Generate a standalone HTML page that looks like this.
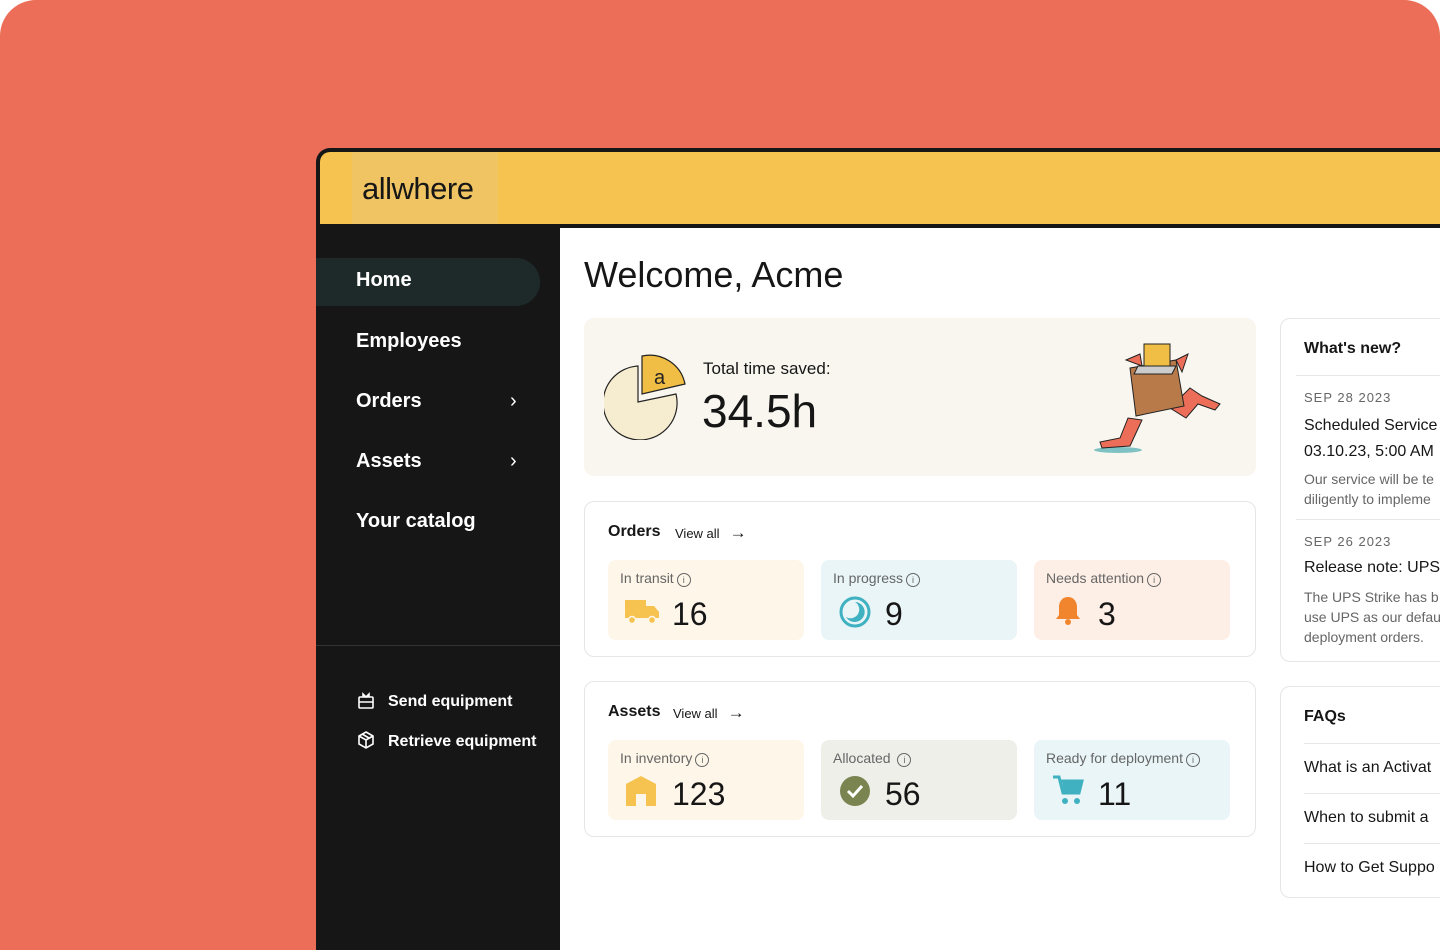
<!DOCTYPE html>
<html><head><meta charset="utf-8"><style>
*{margin:0;padding:0;box-sizing:border-box}
html,body{width:1440px;height:950px;overflow:hidden}
body{background:#fff;font-family:"Liberation Sans",sans-serif;position:relative}
.bg{left:0;top:0;width:1440px;height:950px;background:#ec6e58;border-radius:36px 36px 0 0}
.abs{position:absolute}
.frame{left:316px;top:148px;width:1124px;height:802px;background:#161616;border-radius:14px 0 0 0}
.head{left:320px;top:152px;width:1120px;height:72px;background:#f6c350;border-radius:10px 0 0 0}
.logo{left:352px;top:152px;width:146px;height:72px;background:#f1c463}
.logo span{position:absolute;left:10px;top:19px;font-size:31px;color:#161616;letter-spacing:-0.5px}
.main{left:560px;top:228px;width:880px;height:722px;background:#fff}
.nav{color:#fff;font-weight:bold;font-size:20px;left:356px}
.chev{left:510px;color:#fff;font-size:20px}
.card{border:1px solid #e6e6e6;border-radius:10px;background:#fff}
.stat{border-radius:8px;width:196px;height:80px}
.stat .l{position:absolute;left:12px;top:10px;font-size:14px;color:#666}
.stat .n{position:absolute;left:64px;top:36px;font-size:32px;color:#161616}
.info{display:inline-block;width:14px;height:14px;border:1.3px solid #666;border-radius:50%;font-size:9px;text-align:center;line-height:12px;vertical-align:0px;margin-left:3px;color:#666}
.rt{font-size:16px;color:#161616;left:1304px}
.gray{color:#666;font-size:14px;left:1304px;line-height:20px}
.hr{height:1px;background:#e6e6e6;left:1296px;width:150px}
.arr{font-size:17px;margin-left:10px}
</style></head><body>
<div class="abs bg"></div>
<div class="abs frame"></div>
<div class="abs head"></div>
<div class="abs logo"><span>allwhere</span></div>
<div class="abs main"></div>
<div class="abs" style="left:316px;top:258px;width:224px;height:48px;background:#1e2a2a;border-radius:0 24px 24px 0"></div>
<div class="abs nav" style="top:269px">Home</div>
<div class="abs nav" style="top:330px">Employees</div>
<div class="abs nav" style="top:390px">Orders</div><div class="abs chev" style="top:390px">›</div>
<div class="abs nav" style="top:450px">Assets</div><div class="abs chev" style="top:450px">›</div>
<div class="abs nav" style="top:510px">Your catalog</div>
<div class="abs" style="left:316px;top:645px;width:244px;height:1px;background:#333"></div>
<svg class="abs" style="left:357px;top:692px" width="18" height="18" viewBox="0 0 18 18" fill="none" stroke="#fff" stroke-width="1.6"><rect x="2" y="5" width="14" height="11" rx="1"/><path d="M2 10h14M6 5V2l3 3 3-3v3"/></svg>
<div class="abs" style="left:388px;top:693px;color:#fff;font-weight:bold;font-size:16px">Send equipment</div>
<svg class="abs" style="left:357px;top:731px" width="18" height="18" viewBox="0 0 18 18" fill="none" stroke="#fff" stroke-width="1.6"><path d="M9 1l7 4v8l-7 4-7-4V5zM2 5l7 4 7-4M9 9v8M5 3l7 4"/></svg>
<div class="abs" style="left:388px;top:733px;color:#fff;font-weight:bold;font-size:16px">Retrieve equipment</div>

<div class="abs" style="left:584px;top:254px;font-size:36px;color:#161616">Welcome, Acme</div>

<div class="abs" style="left:584px;top:318px;width:672px;height:158px;background:#f9f6ef;border-radius:10px"></div>
<svg class="abs" style="left:604px;top:354px" width="84" height="86" viewBox="0 0 84 86"><path d="M34 12A37 37 0 1 0 72 40L34 48Z" fill="#f6ecd0" stroke="#222" stroke-width="1.2"/><path d="M38 2A36 36 0 0 1 81 30L38 40Z" fill="#f0bd45" stroke="#222" stroke-width="1.2"/><text x="50" y="30" font-size="20" font-family="Liberation Sans" fill="#222">a</text></svg>
<div class="abs" style="left:703px;top:359px;font-size:17px;color:#161616">Total time saved:</div>
<div class="abs" style="left:702px;top:384px;font-size:46px;color:#161616">34.5h</div>
<svg class="abs" style="left:1090px;top:338px" width="140" height="118" viewBox="0 0 140 118"><ellipse cx="28" cy="112" rx="24" ry="3" fill="#7fc2c4"/><path d="M38 80 L30 100 L10 104 L12 110 L40 108 L52 82Z" fill="#ec6e58" stroke="#222"/><path d="M80 70 L100 50 L112 58 L130 66 L125 72 L108 66 L96 80Z" fill="#ec6e58" stroke="#222"/><path d="M40 30 L86 22 L94 68 L46 78Z" fill="#b87a48" stroke="#222"/><path d="M54 6h26v22H54z" fill="#f0bd45" stroke="#222"/><path d="M48 28h38l-4 8H44z" fill="#ccc" stroke="#222"/><path d="M36 22 L50 16 L52 28Z M86 22 L98 16 L92 34Z" fill="#ec6e58" stroke="#222"/></svg>

<div class="abs card" style="left:584px;top:501px;width:672px;height:156px"></div>
<div class="abs" style="left:608px;top:523px;font-size:16px;font-weight:bold;color:#161616">Orders</div>
<div class="abs" style="left:675px;top:523px;font-size:13px;color:#161616">View all<span class="arr">→</span></div>
<div class="abs stat" style="left:608px;top:560px;background:#fdf6e9"><span class="l">In transit<span class="info">i</span></span>
<svg class="abs" style="left:16px;top:38px" width="36" height="26" viewBox="0 0 36 26"><path d="M1 2h21v18H1zM22 8h8l5 6v6H22z" fill="#f6c350"/><circle cx="8" cy="22" r="3.5" fill="#f6c350" stroke="#fdf6e9" stroke-width="1.5"/><circle cx="28" cy="22" r="3.5" fill="#f6c350" stroke="#fdf6e9" stroke-width="1.5"/></svg><span class="n">16</span></div>
<div class="abs stat" style="left:821px;top:560px;background:#e9f5f7"><span class="l">In progress<span class="info">i</span></span>
<svg class="abs" style="left:17px;top:35px" width="34" height="34" viewBox="0 0 34 34"><circle cx="17" cy="17" r="14" fill="none" stroke="#3fb1c1" stroke-width="3"/><path d="M17 7A10 10 0 1 1 8 22 8 8 0 0 0 17 7Z" fill="#3fb1c1"/></svg><span class="n">9</span></div>
<div class="abs stat" style="left:1034px;top:560px;background:#fdefe6"><span class="l">Needs attention<span class="info">i</span></span>
<svg class="abs" style="left:20px;top:36px" width="28" height="30" viewBox="0 0 28 30"><path d="M14 1c-6 0-9 5-9 10v8l-3 4h24l-3-4v-8c0-5-3-10-9-10z" fill="#f0852e"/><circle cx="14" cy="26" r="3" fill="#f0852e"/></svg><span class="n">3</span></div>

<div class="abs card" style="left:584px;top:681px;width:672px;height:156px"></div>
<div class="abs" style="left:608px;top:703px;font-size:16px;font-weight:bold;color:#161616">Assets</div>
<div class="abs" style="left:673px;top:703px;font-size:13px;color:#161616">View all<span class="arr">→</span></div>
<div class="abs stat" style="left:608px;top:740px;background:#fdf6e9"><span class="l">In inventory<span class="info">i</span></span>
<svg class="abs" style="left:18px;top:36px" width="30" height="30" viewBox="0 0 30 30"><path d="M0 8L15 0l15 8v22H0z" fill="#f6c350"/><rect x="10" y="18" width="10" height="12" fill="#fdf6e9"/></svg><span class="n">123</span></div>
<div class="abs stat" style="left:821px;top:740px;background:#efefea"><span class="l">Allocated <span class="info">i</span></span>
<svg class="abs" style="left:18px;top:35px" width="32" height="32" viewBox="0 0 32 32"><circle cx="16" cy="16" r="15" fill="#7a8450"/><path d="M9 16l5 5 9-10" fill="none" stroke="#fff" stroke-width="3"/></svg><span class="n">56</span></div>
<div class="abs stat" style="left:1034px;top:740px;background:#e9f5f7"><span class="l">Ready for deployment<span class="info">i</span></span>
<svg class="abs" style="left:18px;top:34px" width="32" height="32" viewBox="0 0 32 32"><path d="M1 3h6l4 16h16l3-12H9" fill="none" stroke="#3fb1c1" stroke-width="3"/><path d="M10 8h19l-3 11H12z" fill="#3fb1c1"/><circle cx="13" cy="27" r="3" fill="#3fb1c1"/><circle cx="25" cy="27" r="3" fill="#3fb1c1"/></svg><span class="n">11</span></div>

<div class="abs card" style="left:1280px;top:318px;width:180px;height:344px"></div>
<div class="abs" style="left:1304px;top:340px;font-size:16px;font-weight:bold;color:#161616">What's new?</div>
<div class="abs hr" style="top:375px"></div>
<div class="abs gray" style="top:388px;font-size:13px;letter-spacing:1px">SEP 28 2023</div>
<div class="abs rt" style="top:413px;line-height:26px;white-space:nowrap">Scheduled Service<br>03.10.23, 5:00 AM</div>
<div class="abs gray" style="top:469px;white-space:nowrap">Our service will be te<br>diligently to impleme</div>
<div class="abs hr" style="top:519px"></div>
<div class="abs gray" style="top:532px;font-size:13px;letter-spacing:1px">SEP 26 2023</div>
<div class="abs rt" style="top:559px;white-space:nowrap">Release note: UPS</div>
<div class="abs gray" style="top:587px;white-space:nowrap">The UPS Strike has b<br>use UPS as our defau<br>deployment orders.</div>

<div class="abs card" style="left:1280px;top:686px;width:180px;height:212px"></div>
<div class="abs" style="left:1304px;top:708px;font-size:16px;font-weight:bold;color:#161616">FAQs</div>
<div class="abs hr" style="top:743px;left:1304px"></div>
<div class="abs rt" style="top:759px;white-space:nowrap">What is an Activat</div>
<div class="abs hr" style="top:793px;left:1304px"></div>
<div class="abs rt" style="top:809px;white-space:nowrap">When to submit a</div>
<div class="abs hr" style="top:843px;left:1304px"></div>
<div class="abs rt" style="top:859px;white-space:nowrap">How to Get Suppo</div>
</body></html>
